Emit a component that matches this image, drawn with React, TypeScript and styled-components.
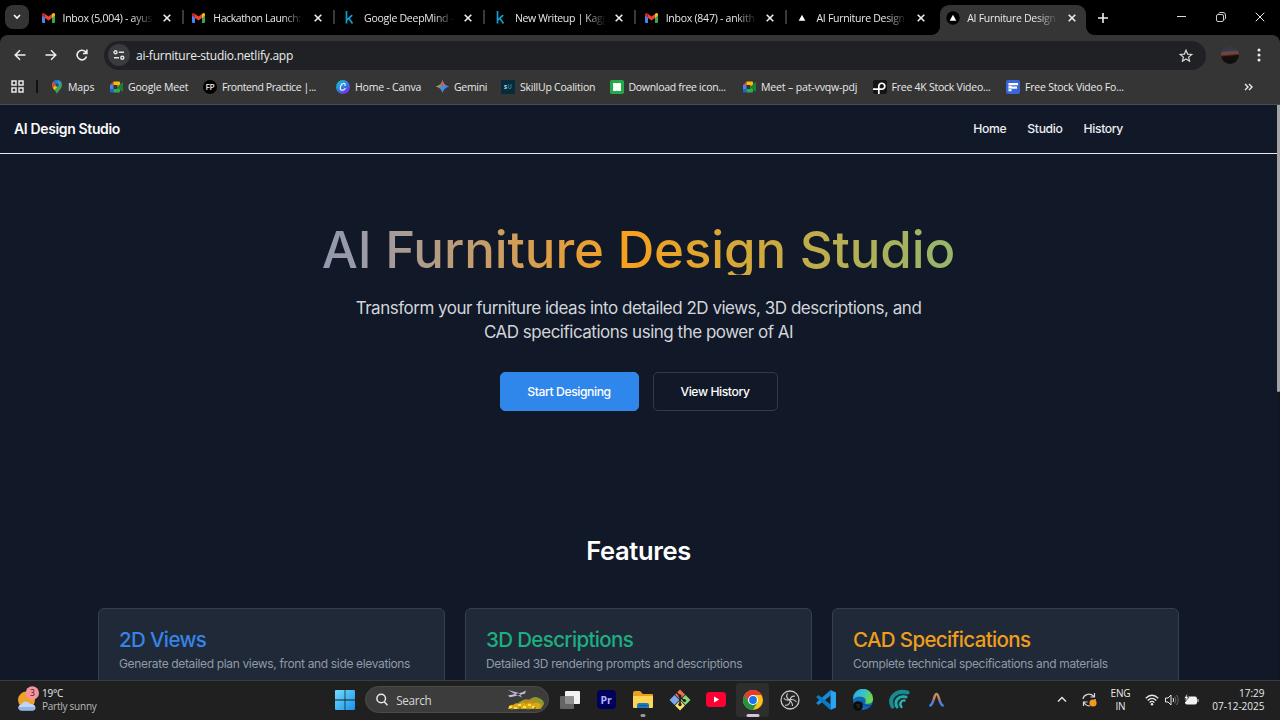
import React from "react";
import styled, { createGlobalStyle, css } from "styled-components";

const uiFont = `"Open Sans", "Noto Sans", sans-serif`;
const pageFont = `Inter, "Liberation Sans", sans-serif`;

const GlobalStyle = createGlobalStyle`
  *, *::before, *::after { box-sizing: border-box; }
  body { margin: 0; background: #111827; overflow: hidden; }
  h1, h2, h3, p { margin: 0; }
  button { border: 0; padding: 0; background: none; color: inherit; font: inherit; }
  svg { display: block; flex: none; }
`;

const Screen = styled.div`
  display: flex;
  flex-direction: column;
  width: 1280px;
  height: 720px;
  overflow: hidden;
  font-family: ${uiFont};
  color: #e9e9e9;
`;

/* Tab strip */
const TabStrip = styled.div`
  display: flex;
  height: 35px;
  flex: none;
  background: #000;
  padding-left: 5px;
`;
const TabSearch = styled.button`
  display: grid;
  place-items: center;
  width: 24px;
  height: 24px;
  margin: 5px 4px 0 0;
  border-radius: 8px;
  background: #343434;
`;
const Tab = styled.div<{ $active?: boolean; $divided?: boolean }>`
  position: relative;
  display: flex;
  align-items: center;
  width: 150.8px;
  height: 35px;
  padding: 0 11px 0 8px;
  ${(p) =>
    p.$divided &&
    css`
      &::after {
        content: "";
        position: absolute;
        right: 0;
        top: 10px;
        width: 2px;
        height: 14px;
        background: #3a3a3a;
      }
    `}
  ${(p) =>
    p.$active &&
    css`
      &::before {
        content: "";
        position: absolute;
        left: 2px;
        right: 3px;
        top: 5px;
        bottom: 0;
        border-radius: 9px 9px 0 0;
        background: #353535;
      }
    `}
`;
const Flare = styled.i<{ $side: "left" | "right" }>`
  position: absolute;
  bottom: 0;
  ${(p) => p.$side}: ${(p) => (p.$side === "left" ? "-6px" : "-5px")};
  width: 8px;
  height: 8px;
  background: radial-gradient(
    circle at ${(p) => (p.$side === "left" ? "0 0" : "100% 0")},
    transparent 7.5px,
    #353535 8px
  );
`;
const TabIcon = styled.span`
  position: relative;
  display: grid;
  place-items: center;
  width: 14px;
  margin-right: 7.5px;
`;
const TabTitle = styled.span<{ $ls: number }>`
  position: relative;
  width: 91px;
  overflow: hidden;
  white-space: nowrap;
  font-size: 10.5px;
  line-height: 16px;
  letter-spacing: ${(p) => p.$ls}px;
  mask-image: linear-gradient(90deg, #000 76%, transparent 100%);
`;
const TabClose = styled.button`
  position: relative;
  display: grid;
  place-items: center;
  width: 12px;
  margin-left: auto;
`;
const NewTab = styled.button`
  display: grid;
  place-items: center;
  width: 26px;
  margin-left: 1px;
`;
const WindowControls = styled.div`
  display: flex;
  margin-left: auto;
`;
const WindowButton = styled.button`
  display: grid;
  place-items: center;
  width: 39.5px;
  height: 34px;
`;

/* Toolbar */
const ToolbarWrap = styled.div`
  flex: none;
  background: #000;
`;
const Chrome = styled.div`
  height: 70px;
  border-radius: 8px 8px 0 0;
  border-bottom: 1px solid #494c52;
  background: #353535;
`;
const Toolbar = styled.div`
  display: flex;
  align-items: center;
  height: 40px;
  padding-left: 4px;
`;
const NavButton = styled.button`
  display: grid;
  place-items: center;
  width: 31px;
  height: 30px;
`;
const AddressBar = styled.div`
  display: flex;
  align-items: center;
  width: 1102px;
  height: 29px;
  margin-left: 7px;
  padding: 0 13px 0 4px;
  border-radius: 15px;
  background: #202124;
`;
const SiteInfo = styled.span`
  display: grid;
  place-items: center;
  width: 22px;
  height: 22px;
  margin-right: 6px;
  border-radius: 50%;
  background: #3a3b3e;
`;
const Address = styled.span`
  flex: 1;
  font-size: 12px;
  letter-spacing: -0.24px;
  color: #ececec;
`;
const Avatar = styled.span`
  width: 18px;
  height: 18px;
  margin: 0 13px 0 15px;
  border-radius: 50%;
  background: linear-gradient(175deg, #36384a 0 25%, #6b4a4c 38%, #7d3f35 46%, #16110f 56%, #0c0c0d 100%);
`;

/* Bookmarks */
const Bookmarks = styled.div`
  display: flex;
  align-items: center;
  height: 23px;
  padding-left: 11px;
`;
const BookmarkDivider = styled.span`
  width: 2px;
  height: 13px;
  margin: 0 13px 0 12px;
  background: #111;
`;
const Bookmark = styled.span<{ $w: number; $ls: number }>`
  display: flex;
  align-items: center;
  gap: 5px;
  width: ${(p) => p.$w}px;
  flex: none;
  white-space: nowrap;
  font-size: 10.5px;
  letter-spacing: ${(p) => p.$ls}px;
`;
const Overflow = styled.span`
  margin-left: auto;
  padding-right: 27px;
`;

/* Web page */
const Viewport = styled.div`
  display: flex;
  flex: 1;
  min-height: 0;
  overflow: hidden;
  background: #111827;
  font-family: ${pageFont};
`;
const Page = styled.main`
  flex: 1;
  min-width: 0;
`;
const ScrollTrack = styled.div`
  width: 3px;
  background: #111623;
`;
const ScrollThumb = styled.div`
  height: 287px;
  border-radius: 0 0 2px 2px;
  background: #a3a3a5;
`;
const SiteHeader = styled.header`
  display: flex;
  align-items: center;
  justify-content: space-between;
  height: 49px;
  padding: 0 154px 2px 14px;
  border-bottom: 1px solid #e5e7eb;
`;
const Brand = styled.span`
  font-size: 14px;
  font-weight: 600;
  letter-spacing: -0.36px;
  color: #f9fafb;
`;
const SiteNav = styled.nav`
  display: flex;
  gap: 21px;
`;
const NavLink = styled.a`
  font-size: 12.2px;
  font-weight: 450;
  letter-spacing: -0.36px;
  color: #eceef2;
`;
const Hero = styled.section`
  display: flex;
  flex-direction: column;
  align-items: center;
  padding-top: 71px;
`;
const HeroTitle = styled.h1`
  font-size: 51px;
  line-height: 50px;
  font-weight: 500;
  letter-spacing: -0.1px;
  white-space: nowrap;
  color: transparent;
  background: linear-gradient(90deg, #9298ae 0%, #9e9ba4 8%, #f7a01e 48%, #96b66c 100%);
  background-clip: text;
  -webkit-background-clip: text;
`;
const HeroText = styled.p`
  margin-top: 21px;
  text-align: center;
  font-size: 17px;
  line-height: 24px;
  letter-spacing: -0.49px;
  color: #d1d5db;
`;
const HeroActions = styled.div`
  display: flex;
  gap: 14px;
  margin-top: 28px;
`;
const ActionButton = styled.button<{ $primary?: boolean }>`
  width: ${(p) => (p.$primary ? 139 : 125)}px;
  height: 39px;
  padding-bottom: 1px;
  border: 1px solid ${(p) => (p.$primary ? "#2f86eb" : "#323a49")};
  border-radius: 5px;
  background: ${(p) => (p.$primary ? "#2f86eb" : "transparent")};
  color: #fff;
  font-size: 12.2px;
  font-weight: 500;
  letter-spacing: -0.42px;
`;
const Features = styled.section`
  padding: 125px 98px 0;
`;
const FeaturesTitle = styled.h2`
  text-align: center;
  font-size: 25.5px;
  line-height: 30px;
  font-weight: 600;
  letter-spacing: -0.35px;
  color: #fff;
`;
const CardGrid = styled.div`
  display: grid;
  grid-template-columns: repeat(3, 347px);
  gap: 20px;
  margin-top: 42px;
`;
const Card = styled.article`
  height: 110px;
  padding: 17px 20px;
  border: 1px solid #353f4e;
  border-radius: 6px;
  background: #1f2937;
`;
const CardTitle = styled.h3<{ $color: string }>`
  font-size: 20.5px;
  line-height: 28px;
  font-weight: 500;
  letter-spacing: -0.64px;
  color: ${(p) => p.$color};
`;
const CardText = styled.p`
  margin-top: 1px;
  font-size: 12px;
  line-height: 18px;
  letter-spacing: -0.35px;
  white-space: nowrap;
  color: #9299a6;
`;

/* Taskbar */
const Taskbar = styled.footer`
  display: grid;
  grid-template-columns: 326.5px 1fr auto;
  height: 40px;
  flex: none;
  padding-bottom: 2px;
  border-top: 1px solid #3b3c40;
  background: #202020;
`;
const Weather = styled.div`
  display: flex;
  align-items: center;
  gap: 2px;
  padding-left: 17px;
  font-size: 10px;
  line-height: 13px;
  letter-spacing: -0.25px;
`;
const WeatherState = styled.div`
  color: #b9b9b9;
`;
const AppRow = styled.div`
  display: flex;
  align-items: center;
`;
const TaskItem = styled.span<{ $active?: boolean; $running?: boolean }>`
  position: relative;
  display: grid;
  place-items: center;
  width: 33px;
  height: 34px;
  margin: 0 1.85px;
  border-radius: 4px;
  background: ${(p) => (p.$active ? "#2e2e2e" : "transparent")};
  ${(p) =>
    (p.$active || p.$running) &&
    css`
      &::after {
        content: "";
        position: absolute;
        bottom: 0;
        left: 50%;
        width: ${p.$active ? 13 : 5}px;
        height: 3px;
        border-radius: 2px;
        transform: translateX(-50%);
        background: ${p.$active ? "#d3c4d6" : "#9a9a9a"};
      }
    `}
`;
const SearchBox = styled.div`
  display: flex;
  align-items: center;
  width: 184px;
  height: 27px;
  margin: 0 2px 0 2px;
  padding: 0 3px 0 10px;
  border: 1px solid #4b4b4b;
  border-radius: 14px;
  background: #3c3c3c;
  color: #d6d6d6;
  font-size: 11.7px;
  letter-spacing: -0.3px;
`;
const SearchLabel = styled.span`
  flex: 1;
  margin-left: 8px;
`;
const PrTile = styled.span`
  display: grid;
  place-items: center;
  width: 19px;
  height: 19px;
  border-radius: 4px;
  background: #00005b;
  color: #b5b0ff;
  font-size: 10.5px;
  font-weight: 700;
`;
const Tray = styled.div`
  display: flex;
  align-items: center;
  padding-right: 15.5px;
  font-size: 10px;
  line-height: 13px;
`;
const Language = styled.div`
  width: 24px;
  margin: 0 12px 0 5px;
  text-align: center;
  letter-spacing: -0.2px;
`;
const Clock = styled.div`
  width: 54px;
  margin-left: 12px;
  text-align: right;
  white-space: nowrap;
`;

/* Icons */
const Gmail = () => (
  <svg width="13" height="10" viewBox="0 0 26 20">
    <path d="M0 3v15a2 2 0 0 0 2 2h4V7z" fill="#4285f4" />
    <path d="M20 7v13h4a2 2 0 0 0 2-2V3z" fill="#34a853" />
    <path d="M20 2v8l6-5V3c0-3-3-4-5-2z" fill="#fbbc04" />
    <path d="M0 3v2l6 5V2L5 1C3-1 0 0 0 3z" fill="#c5221f" />
    <path d="M6 2v8l7 5 7-5V2l-7 5z" fill="#ea4335" />
  </svg>
);
const Kaggle = () => (
  <svg width="9" height="13" viewBox="0 0 9 13" fill="none" stroke="#139cd0" strokeWidth="1.7">
    <path d="M1.5 0v12.5M7.2 4.2 2 8.8M3.8 7.3l3.7 5.2" />
  </svg>
);
const Triangle = ({ disc }: { disc?: boolean }) => (
  <svg width="14" height="14" viewBox="0 0 14 14">
    {disc && <circle cx="7" cy="7" r="6.7" fill="#000" />}
    <path d="M7 3.8 10.3 9.7H3.7z" fill="#fff" />
  </svg>
);
const Cross = ({ size = 8, weight = 1.6 }: { size?: number; weight?: number }) => (
  <svg width={size} height={size} viewBox={`0 0 ${size} ${size}`} stroke="#eee" strokeWidth={weight}>
    <path d={`M.7 .7 ${size - 0.7} ${size - 0.7}M${size - 0.7} .7 .7 ${size - 0.7}`} />
  </svg>
);
const MapsPin = () => (
  <svg width="12" height="14" viewBox="0 0 12 14">
    <path d="M6 14C5.500 11 1 9 1 5a5 5 0 0 1 10 0c0 4-4.500 6-5 9z" fill="#34a853" />
    <path d="M1 5a5 5 0 0 1 1.200-3.200L5 4 1.900 8A5 5 0 0 1 1 5z" fill="#ea4335" />
    <path d="M2.200 1.800A5 5 0 0 1 7.600.3L5 4z" fill="#1a73e8" />
    <path d="M7.600.3A5 5 0 0 1 10.500 2.800L7 7z" fill="#4285f4" />
    <path d="M1.900 8 4.600 5 7 6 3.600 10z" fill="#fbbc04" />
    <circle cx="6" cy="5" r="1.700" fill="#24487f" />
  </svg>
);
const Meet = () => (
  <svg width="13" height="12" viewBox="0 0 26 22">
    <path d="M0 7 7 0v7z" fill="#ea4335" />
    <path d="M7 0h11a2 2 0 0 1 2 2v6l-5 4V7H7z" fill="#fbbc04" />
    <path d="M0 7h7v8H0z" fill="#4285f4" />
    <path d="M0 15h7v7H2a2 2 0 0 1-2-2z" fill="#1967d2" />
    <path d="M7 15h8v-4l5 4v5a2 2 0 0 1-2 2H7z" fill="#34a853" />
    <path d="m14 11 10-9q2-1 2 1v16q0 2-2 1z" fill="#188038" />
  </svg>
);
const FrontendPractice = () => (
  <svg width="14" height="14" viewBox="0 0 14 14">
    <circle cx="7" cy="7" r="7" fill="#000" />
    <text x="7" y="9.500" textAnchor="middle" fontSize="7.500" fontWeight="500" fill="#fff" fontFamily="Inter">FP</text>
  </svg>
);
const Canva = () => (
  <svg width="14" height="14" viewBox="0 0 14 14">
    <defs>
      <linearGradient id="canva" x1="0" y1="0" x2=".7" y2="1">
        <stop offset=".1" stopColor="#11c5cf" />
        <stop offset=".55" stopColor="#2f7fe6" />
        <stop offset="1" stopColor="#7d2ae8" />
      </linearGradient>
    </defs>
    <circle cx="7" cy="7" r="7" fill="url(#canva)" />
    <path d="M9 5.500C9.700 4 8.500 3.200 7.300 3.500 5 4 3.800 7 4.400 9c.6 2 3.300 1.600 4.800-.5" fill="none" stroke="#fff" strokeWidth="1.100" strokeLinecap="round" />
  </svg>
);
const Gemini = () => (
  <svg width="13" height="13" viewBox="0 0 13 13">
    <defs>
      <linearGradient id="gem" x1="0" y1=".4" x2="1" y2=".6">
        <stop offset="0" stopColor="#eab42d" />
        <stop offset=".3" stopColor="#6b9b78" />
        <stop offset=".5" stopColor="#4b87e5" />
        <stop offset="1" stopColor="#4387f6" />
      </linearGradient>
    </defs>
    <path d="M6.500 0Q7.800 5.200 13 6.500 7.800 7.800 6.500 13 5.200 7.800 0 6.500 5.200 5.200 6.500 0z" fill="url(#gem)" />
    <path d="M6.500 0Q7.200 3.800 9 5.200L6 6 4.500 4.800Q6 3.500 6.500 0z" fill="#e8524d" />
  </svg>
);
const SkillUp = () => (
  <svg width="14" height="14" viewBox="0 0 14 14">
    <path d="M0 0h14v14H0z" fill="#062b3d" />
    <text x="3" y="9.200" fontSize="5.500" fontWeight="700" fill="#dbe8ee" fontFamily="Inter">s</text>
    <text x="6.800" y="9.200" fontSize="5.500" fontWeight="700" fill="#2d8f9b" fontFamily="Inter">U</text>
  </svg>
);
const Icons8 = () => (
  <svg width="14" height="14" viewBox="0 0 14 14">
    <rect width="14" height="14" rx="2" fill="#23ab49" />
    <g fill="#fff">
      <rect x="3" y="3" width="4" height="4" rx=".8" />
      <rect x="7" y="3" width="4" height="4" rx=".8" />
      <rect x="3" y="7" width="4" height="4" rx=".8" />
      <rect x="7" y="7" width="4" height="4" rx=".8" />
      <rect x="5" y="5" width="4" height="4" />
    </g>
  </svg>
);
const Pexels = () => (
  <svg width="14" height="14" viewBox="0 0 14 14">
    <rect width="14" height="14" rx="2" fill="#141414" />
    <path d="M0 9.200h8.300A3 3 0 1 0 5.800 6v8" fill="none" stroke="#fff" strokeWidth="1.700" />
  </svg>
);
const StockF = () => (
  <svg width="14" height="14" viewBox="0 0 14 14">
    <rect width="14" height="14" rx="2" fill="#3a66dc" />
    <path d="M2.500 3h9.500v2.200H5.500V6.500H11v2.200H5.500V11.300h-3z" fill="#fff" />
    <path d="M2.500 5.500h3M2.500 8.800h3" stroke="#3a66dc" strokeWidth=".6" />
  </svg>
);
const WindowsLogo = () => (
  <svg width="20" height="20" viewBox="0 0 20 20">
    <defs>
      <linearGradient id="win" x1="0" y1="0" x2="1" y2="1">
        <stop offset="0" stopColor="#74dcfb" />
        <stop offset="1" stopColor="#1592ee" />
      </linearGradient>
    </defs>
    <path d="M0 1Q0 0 1 0h8.600v9.600H0zM10.400 0H19q1 0 1 1v8.600h-9.600zM0 10.400h9.600V20H1q-1 0-1-1zM10.400 10.400H20V19q0 1-1 1h-8.600z" fill="url(#win)" />
  </svg>
);
const SearchScene = () => (
  <svg width="38" height="22" viewBox="0 0 38 22">
    <path d="M10 15Q16 9 22 11q5-5 10-2 5 2 5 6l-3 5H7z" fill="#8c9a2e" />
    <path d="M16 11q8-2 17 3l3 2-4 4H12z" fill="#b98a22" />
    <path d="M1 20q1-5 5-4 3-3 6-1 4-3 7 0 4-3 7 0 4-3 8 1-1 3-3 4z" fill="#dba714" />
    <path d="M2 18h3m2 1h3m1-3h3m2 2h3m2-2h3m1 2h3" stroke="#ffe13a" strokeWidth="2" />
    <path d="M4 20h2m6-1h2m6 1h2m5-1h2" stroke="#63861f" strokeWidth="1.500" />
    <path d="M1 6.500 8 5l7-1.500 4-2-1 3-5 1.500L3 8.200zM1 1l7 4 7 3.500-3-4.500z" fill="#c2bdd8" />
  </svg>
);
const TaskView = () => (
  <svg width="22" height="18" viewBox="0 0 22 18">
    <rect x="6" y="0" width="15" height="13" rx="1" fill="#f2f2f2" />
    <rect x="1" y="5" width="14" height="13" rx="1" fill="#777" fillOpacity=".8" />
  </svg>
);
const Folder = () => (
  <svg width="22" height="18" viewBox="0 0 22 18">
    <path d="M1 2q0-2 2-2h5l3 3h9q1 0 1 1v5H1z" fill="#e6a21c" />
    <path d="M1 5h20v11q0 1-1 1H2q-1 0-1-1z" fill="#ffd455" />
    <path d="M5 17v-3q0-2 2-2h8q2 0 2 2v3z" fill="#1879bf" />
    <path d="M7 14.500h8" stroke="#0e5894" />
  </svg>
);
const GitIcon = () => (
  <svg width="22" height="22" viewBox="0 0 22 22">
    <path d="m11 .5 5 5-5 5-5-5z" fill="#ee7157" />
    <path d="m16.500 6 5 5-5 5-5-5z" fill="#89d67b" />
    <path d="m5.500 6 5 5-5 5-5-5z" fill="#7ca6ef" />
    <path d="m11 11.500 5 5-5 5-5-5z" fill="#f6e26b" />
    <path d="M7.500 3.500 11 7v9M11 8l4 3.500" stroke="#22201f" strokeWidth="1.500" fill="none" />
    <circle cx="11" cy="7" r="1.600" fill="#22201f" />
    <circle cx="11" cy="15.500" r="1.700" fill="#22201f" />
    <circle cx="15.500" cy="11.500" r="1.600" fill="#22201f" />
  </svg>
);
const YouTube = () => (
  <svg width="20" height="15" viewBox="0 0 20 15">
    <rect width="20" height="15" rx="3.500" fill="#ff0033" />
    <path d="m8 4.500 5.200 3L8 10.500z" fill="#fff" />
  </svg>
);
const ChromeIcon = () => (
  <svg width="20" height="20" viewBox="0 0 20 20">
    <circle cx="10" cy="10" r="10" fill="#fbc116" />
    <path d="M10 10V5h8.660A10 10 0 0 0 1.340 5L5.670 12.500z" fill="#e33b2e" />
    <path d="M10 10 5.670 12.500 1.340 5A10 10 0 0 0 10 20l4.330-7.500z" fill="#229342" />
    <circle cx="10" cy="10" r="5" fill="#fff" />
    <circle cx="10" cy="10" r="3.900" fill="#1a73e8" />
  </svg>
);
const Obs = () => (
  <svg width="20" height="20" viewBox="0 0 20 20" fill="none" stroke="#c9c9c9">
    <circle cx="10" cy="10" r="9" fill="#242426" strokeWidth="1.300" />
    <path d="M7.500 3.500C5.800 6.300 7 9.300 10 9.700M10 9.700c2.500-.5 4.500-.8 6.500 2.300M10 9.700c.5 3.500-1.500 5.800-5 5.500M10 9.700c.8-2.700 2.500-4 5-3.500M10 9.700C11 12 13 13.500 12.500 16M10 9.700C7.500 10.500 5 10 3.800 8" strokeWidth="1.100" />
  </svg>
);
const VsCode = () => (
  <svg width="20" height="20" viewBox="0 0 20 20">
    <path d="M14.500 0 20 2.500v15L14.500 20z" fill="#27a5ee" />
    <path d="M14.500 0 15 5.200 2.500 15 0 13z" fill="#1a8ad6" />
    <path d="M0 7 2.500 5 15 14.800l-.5 5.200z" fill="#087cc5" />
  </svg>
);
const Edge = () => (
  <svg width="22" height="22" viewBox="0 0 22 22">
    <defs>
      <linearGradient id="edge" x1="0" y1="0" x2="1" y2=".5">
        <stop offset="0" stopColor="#2aa5de" />
        <stop offset=".5" stopColor="#35c1ce" />
        <stop offset="1" stopColor="#69d84c" />
      </linearGradient>
    </defs>
    <circle cx="11" cy="11" r="10" fill="#1368b5" />
    <path d="M1 10A10 10 0 0 1 21 9.500C21.500 14 17 15.500 13 14.500c1-1.500 1.500-5-2-6.500-4-1.500-9 0-10 3z" fill="url(#edge)" />
    <path d="M10 11.500q-.5 6 9 5.300" stroke="#0b4f94" strokeWidth="1.500" fill="none" />
    <circle cx="6" cy="17" r="4.800" fill="#0a0b0c" />
    <path d="M4 16h4M5 18h3" stroke="#343434" />
  </svg>
);
const Waves = () => (
  <svg width="21" height="21" viewBox="0 0 21 21" fill="none" strokeLinecap="round">
    <path d="M3.500 17.500C-1 9 7 .5 18.500 3.500" stroke="#178b91" strokeWidth="4" />
    <path d="M8 18C4.500 12 10 5.800 17 8" stroke="#27a7a5" strokeWidth="3" />
    <path d="M12.500 18c-2.500-3-.5-7 3-6.500" stroke="#30bbb2" strokeWidth="2.300" />
    <path d="M5.700 18.500C2.500 11 8 4 18 5.800M10.300 19C7.500 13.500 11.500 9 16 9.700" stroke="#153f44" strokeWidth=".9" />
  </svg>
);
const Arc = () => (
  <svg width="15" height="15" viewBox="0 0 15 15">
    <defs>
      <linearGradient id="arc" x1="0" y1="0" x2="0" y2="1">
        <stop offset="0" stopColor="#8aa46a" />
        <stop offset=".3" stopColor="#e67c44" />
        <stop offset=".6" stopColor="#6c77c8" />
        <stop offset="1" stopColor="#3b87f2" />
      </linearGradient>
    </defs>
    <path d="M1.300 13.500C5 11.500 5 2 7.500 2s2.500 9.500 6.200 11.500" fill="none" stroke="url(#arc)" strokeWidth="2.500" strokeLinecap="round" />
  </svg>
);
const WeatherIcon = () => (
  <svg width="23" height="28" viewBox="0 0 23 28">
    <circle cx="9.500" cy="14" r="8.500" fill="#eea229" />
    <path d="M5 24.500c-5 0-4.500-6-.5-6 1-4 7-4 8.500-.5 6-1 7.500 6.500 2.500 6.500z" fill="#bfd5f5" />
    <path d="M5 24.500c-3 0-4-2-3.500-3.500h16c1 2-.5 3.500-2.500 3.500z" fill="#8fb4e8" />
    <circle cx="15.300" cy="7" r="6.700" fill="#f6949c" />
    <text x="15.300" y="10.300" textAnchor="middle" fontSize="8.500" fill="#3b1c20" fontFamily="Open Sans">3</text>
  </svg>
);

const tabs = [
  { title: "Inbox (5,004) - ayus", icon: <Gmail />, ls: -0.25 },
  { title: "Hackathon Launch:", icon: <Gmail />, ls: -0.4 },
  { title: "Google DeepMind -", icon: <Kaggle />, ls: -0.26 },
  { title: "New Writeup | Kagg", icon: <Kaggle />, ls: -0.33 },
  { title: "Inbox (847) - ankith", icon: <Gmail />, ls: -0.25 },
  { title: "AI Furniture Design", icon: <Triangle />, ls: -0.3 },
  { title: "AI Furniture Design", icon: <Triangle disc />, ls: -0.3 },
];

const bookmarks = [
  { title: "Maps", icon: <MapsPin />, w: 59, ls: -0.1 },
  { title: "Google Meet", icon: <Meet />, w: 93, ls: -0.18 },
  { title: "Frontend Practice |...", icon: <FrontendPractice />, w: 133, ls: -0.43 },
  { title: "Home - Canva", icon: <Canva />, w: 100, ls: -0.2 },
  { title: "Gemini", icon: <Gemini />, w: 65, ls: -0.3 },
  { title: "SkillUp Coalition", icon: <SkillUp />, w: 108.5, ls: -0.24 },
  { title: "Download free icon...", icon: <Icons8 />, w: 133.5, ls: -0.3 },
  { title: "Meet – pat-vvqw-pdj", icon: <Meet />, w: 129.5, ls: -0.14 },
  { title: "Free 4K Stock Video...", icon: <Pexels />, w: 133.5, ls: -0.24 },
  { title: "Free Stock Video Fo...", icon: <StockF />, w: 125, ls: -0.22 },
];

const cards = [
  { title: "2D Views", text: "Generate detailed plan views, front and side elevations", color: "#3784e8" },
  { title: "3D Descriptions", text: "Detailed 3D rendering prompts and descriptions", color: "#1eae7f" },
  { title: "CAD Specifications", text: "Complete technical specifications and materials", color: "#f09d1c" },
];

const TabBar = () => (
  <TabStrip>
    <TabSearch>
      <svg width="8" height="6" fill="none" stroke="#fff" strokeWidth="1.6"><path d="m1 1 3 3 3-3" /></svg>
    </TabSearch>
    {tabs.map((t, i) => (
      <Tab key={i} $active={i === 6} $divided={i < 5 || i === 4}>
        {i === 6 && <><Flare $side="left" /><Flare $side="right" /></>}
        <TabIcon>{t.icon}</TabIcon>
        <TabTitle $ls={t.ls}>{t.title}</TabTitle>
        <TabClose><Cross /></TabClose>
      </Tab>
    ))}
    <NewTab>
      <svg width="10" height="10" stroke="#eee" strokeWidth="1.6"><path d="M5 0v10M0 5h10" /></svg>
    </NewTab>
    <WindowControls>
      <WindowButton><svg width="9" height="2" stroke="#ddd"><path d="M0 .5h9" /></svg></WindowButton>
      <WindowButton>
        <svg width="10" height="10" fill="none" stroke="#ccc"><rect x=".5" y="2.500" width="7" height="7" rx="1.500" /><path d="M2.500 1.500Q3 .5 4 .5h3q2.500 0 2.500 2.500v3q0 1-1 1.500" /></svg>
      </WindowButton>
      <WindowButton><Cross size={10} weight={1} /></WindowButton>
    </WindowControls>
  </TabStrip>
);

const BrowserBar = () => (
  <ToolbarWrap>
    <Chrome>
      <Toolbar>
        <NavButton><svg width="12" height="12" fill="none" stroke="#eee" strokeWidth="1.5"><path d="M11.500 6H1.500M6 1.200 1.200 6 6 10.800" /></svg></NavButton>
        <NavButton><svg width="12" height="12" fill="none" stroke="#eee" strokeWidth="1.5"><path d="M.5 6h10M6 1.200 10.800 6 6 10.800" /></svg></NavButton>
        <NavButton><svg width="12" height="12" fill="none" stroke="#eee" strokeWidth="1.6"><path d="M10.500 7.500A4.800 4.800 0 1 1 9.300 2.600L10.700 4.200M10.900.5v4H6.900" /></svg></NavButton>
        <AddressBar>
          <SiteInfo>
            <svg width="12" height="10" fill="none" stroke="#e3e3e3" strokeWidth="1.4"><circle cx="2.500" cy="2.300" r="1.500" /><path d="M5.800 2.300H11M1 7.700h5" /><circle cx="9.300" cy="7.700" r="1.500" /></svg>
          </SiteInfo>
          <Address>ai-furniture-studio.netlify.app</Address>
          <svg width="14" height="13" viewBox="0 0 14 13" fill="none" stroke="#d8d8d8" strokeWidth="1.2"><path d="m7 1.200 1.600 3.900 4.200.3-3.200 2.700 1 4.100L7 10l-3.600 2.200 1-4.100L1.200 5.400l4.200-.3z" /></svg>
        </AddressBar>
        <Avatar />
        <svg width="14" height="14" fill="#eee"><circle cx="7" cy="2" r="1.500" /><circle cx="7" cy="7" r="1.500" /><circle cx="7" cy="12" r="1.500" /></svg>
      </Toolbar>
      <Bookmarks>
        <svg width="13" height="13" fill="none" stroke="#e8e8e8" strokeWidth="1.5"><path d="M1 1h4v4H1zM8 1h4v4H8zM1 8h4v4H1zM8 8h4v4H8z" /></svg>
        <BookmarkDivider />
        {bookmarks.map((b) => (
          <Bookmark key={b.title} $w={b.w} $ls={b.ls}>{b.icon}{b.title}</Bookmark>
        ))}
        <Overflow><svg width="9" height="8" fill="none" stroke="#eee" strokeWidth="1.4"><path d="m1 1 3 3-3 3M5 1l3 3-3 3" /></svg></Overflow>
      </Bookmarks>
    </Chrome>
  </ToolbarWrap>
);

const Site = () => (
  <Viewport>
    <Page>
      <SiteHeader>
        <Brand>AI Design Studio</Brand>
        <SiteNav><NavLink>Home</NavLink><NavLink>Studio</NavLink><NavLink>History</NavLink></SiteNav>
      </SiteHeader>
      <Hero>
        <HeroTitle>AI Furniture Design Studio</HeroTitle>
        <HeroText>
          Transform your furniture ideas into detailed 2D views, 3D descriptions, and
          <br />
          CAD specifications using the power of AI
        </HeroText>
        <HeroActions>
          <ActionButton $primary>Start Designing</ActionButton>
          <ActionButton>View History</ActionButton>
        </HeroActions>
      </Hero>
      <Features>
        <FeaturesTitle>Features</FeaturesTitle>
        <CardGrid>
          {cards.map((c) => (
            <Card key={c.title}>
              <CardTitle $color={c.color}>{c.title}</CardTitle>
              <CardText>{c.text}</CardText>
            </Card>
          ))}
        </CardGrid>
      </Features>
    </Page>
    <ScrollTrack><ScrollThumb /></ScrollTrack>
  </Viewport>
);

const SystemBar = () => (
  <Taskbar>
    <Weather>
      <WeatherIcon />
      <div>
        <div>19°C</div>
        <WeatherState>Partly sunny</WeatherState>
      </div>
    </Weather>
    <AppRow>
      <TaskItem><WindowsLogo /></TaskItem>
      <SearchBox>
        <svg width="12" height="13" fill="none" stroke="#e8e8e8" strokeWidth="1.5"><circle cx="5.200" cy="5.500" r="4.300" /><path d="m8.300 8.800 3.200 3.400" /></svg>
        <SearchLabel>Search</SearchLabel>
        <SearchScene />
      </SearchBox>
      <TaskItem><TaskView /></TaskItem>
      <TaskItem><PrTile>Pr</PrTile></TaskItem>
      <TaskItem $running><Folder /></TaskItem>
      <TaskItem><GitIcon /></TaskItem>
      <TaskItem><YouTube /></TaskItem>
      <TaskItem $active><ChromeIcon /></TaskItem>
      <TaskItem><Obs /></TaskItem>
      <TaskItem><VsCode /></TaskItem>
      <TaskItem><Edge /></TaskItem>
      <TaskItem><Waves /></TaskItem>
      <TaskItem><Arc /></TaskItem>
    </AppRow>
    <Tray>
      <svg width="10" height="7" fill="none" stroke="#e8e8e8" strokeWidth="1.4"><path d="m1 5.500 4-4 4 4" /></svg>
      <svg width="37" height="16" viewBox="-15 0 37 16" fill="none" stroke="#d5d5d5" strokeWidth="1.200">
        <path d="M1 7C1.500 3 7 0 12 4.500M12.500 1v4h-4M1.500 14v-4h4M2 10.500Q4 14 8 14M13 7v2" />
        <circle cx="11" cy="11" r="3.600" fill="#f39a1d" stroke="none" />
      </svg>
      <Language>ENG<br />IN</Language>
      <svg width="14" height="12" viewBox="0 0 14 12" fill="none" stroke="#e8e8e8" strokeWidth="1.300"><path d="M.7 4.200Q7-1.800 13.300 4.200M2.700 6.400q4.300-4 8.600 0M4.600 8.500Q7 6.300 9.400 8.500" /><circle cx="7" cy="10.200" r="1.200" fill="#e8e8e8" stroke="none" /></svg>
      <svg width="20" height="12" viewBox="-6 0 20 12" fill="none" stroke="#e8e8e8"><path d="M.5 4H3l3-3v10L3 8H.5zM8 4q1.300 2 0 4" /><path d="M9.700 2.500q2.600 3.500 0 7M11.500 1q3.500 5 0 10" stroke="#666" /></svg>
      <svg width="20" height="13" viewBox="-6 0 20 13"><rect x="0" y="3.500" width="12" height="8" rx="2" fill="#f2f2f2" /><path d="M12.500 6v3h1V6z" fill="#e8e8e8" /><path d="M2.500 0-1 5.500h2L0 9l4-5H2z" fill="#fff" stroke="#202020" strokeWidth=".7" /></svg>
      <Clock>17:29<br />07-12-2025</Clock>
    </Tray>
  </Taskbar>
);

export default function App() {
  return (
    <Screen>
      <GlobalStyle />
      <TabBar />
      <BrowserBar />
      <Site />
      <SystemBar />
    </Screen>
  );
}
